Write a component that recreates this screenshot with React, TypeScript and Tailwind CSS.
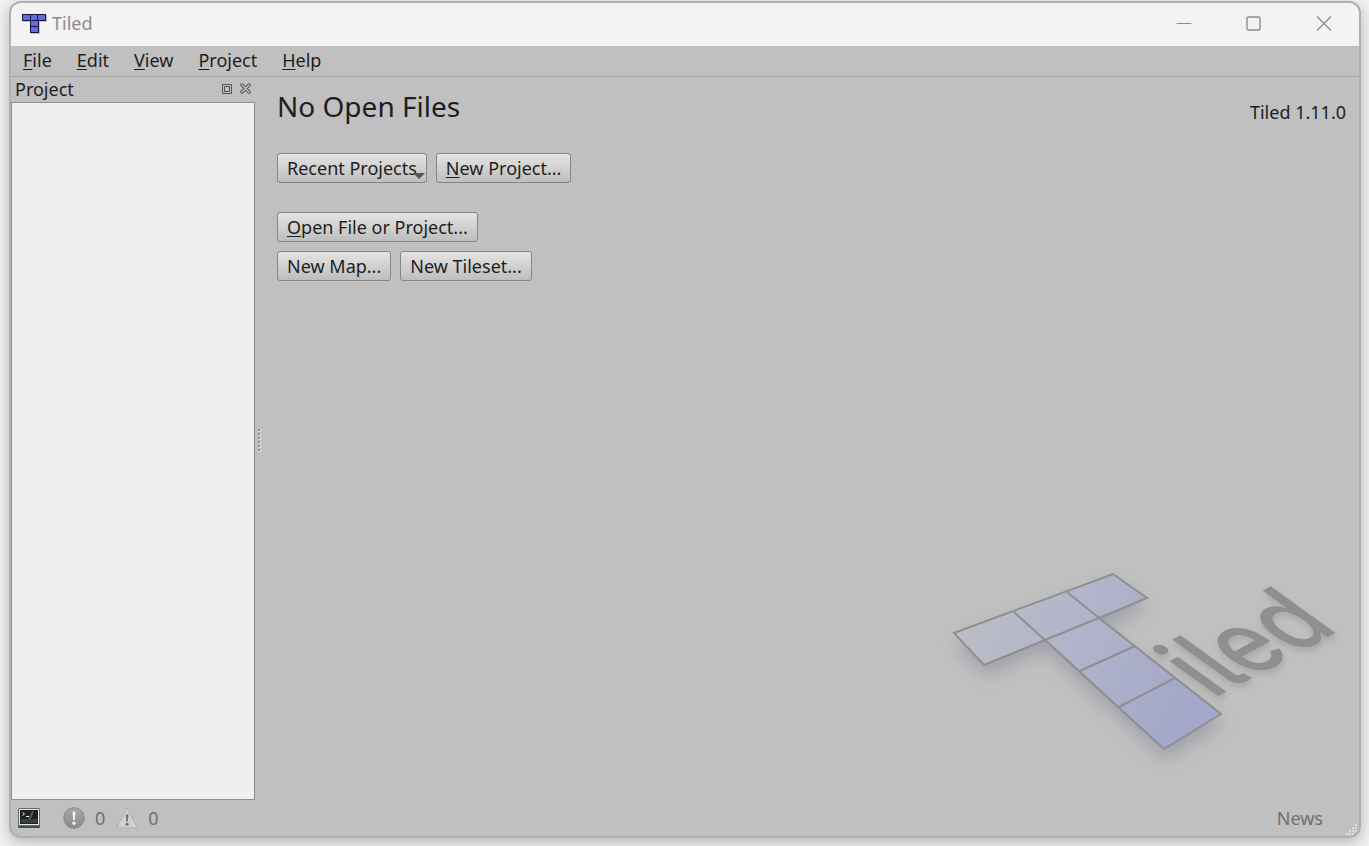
import type { ReactNode } from "react";

const menus = ["File", "Edit", "View", "Project", "Help"];

// underlines the first letter as keyboard mnemonic
function Mnemonic({ text }: { text: string }) {
  return (
    <span>
      <span className="underline decoration-1 underline-offset-2">{text[0]}</span>
      {text.slice(1)}
    </span>
  );
}

function PushButton({ children }: { children: ReactNode }) {
  return (
    <button
      type="button"
      className="flex h-[30px] items-center whitespace-nowrap rounded-[3px] border border-[#868686] bg-linear-to-b from-[#e4e4e4] to-[#bebebe] px-[9px] hover:from-[#ececec]"
    >
      {children}
    </button>
  );
}

function AppIcon() {
  return (
    <svg width="25" height="20" viewBox="0 0 25 20" aria-hidden="true" shapeRendering="crispEdges">
      <path d="M1 1h24v7h-7v12H9V8H1z" fill="#c4c4c8" />
      <path d="M0 0h24v7h-7v12H8V7H0z" fill="#16163c" />
      <g fill="#626bdf">
        <path d="M1 1h7v5H1zM9 1h6v5H9zM16 1h7v5h-7zM9 7h7v5H9zM9 13h7v5H9z" />
      </g>
    </svg>
  );
}

function TiledLogo() {
  return (
    <svg width="406" height="226" viewBox="0 0 406 226" role="img" aria-label="Tiled logo" className="overflow-visible">
      <defs>
        <linearGradient id="tiles" x1="20" y1="60" x2="250" y2="160" gradientUnits="userSpaceOnUse">
          <stop offset="0" stopColor="#bcbdc7" />
          <stop offset="0.45" stopColor="#b1b4ca" />
          <stop offset="1" stopColor="#a3a7c9" />
        </linearGradient>
        <filter id="soft" x="-20%" y="-20%" width="140%" height="150%">
          <feGaussianBlur stdDeviation="9" />
        </filter>
        <filter id="softText" x="-20%" y="-20%" width="140%" height="150%">
          <feDropShadow dx="1" dy="4" stdDeviation="3" floodColor="#8c8c8c" floodOpacity="0.5" />
        </filter>
      </defs>
      <path
        d="M14 73L173 14L207 38L159 58L281 154L224 189L105 80L44 105Z"
        transform="translate(1 10)"
        fill="#888a9b"
        opacity="0.6"
        filter="url(#soft)"
      />
      <path
        d="M14 73L173 14L207 38L159 58L281 154L224 189L105 80L44 105Z"
        fill="url(#tiles)"
        stroke="#8f8f8f"
        strokeWidth="2"
      />
      <path
        d="M74 52L105 80L159 58L127 32M140 111L195 86M179 147L235 118"
        fill="none"
        stroke="#8f8f8f"
        strokeWidth="2"
      />
      <g filter="url(#softText)">
        <text
          transform="matrix(0.74 -0.4 0.89 0.64 273 139)"
          fontSize="100"
          fontWeight="500"
          fill="#8f8f8f"
          className="font-['Inter','Open_Sans',sans-serif] [font-feature-settings:'cv05']"
        >
          iled
        </text>
      </g>
    </svg>
  );
}

function TitleBar() {
  return (
    <header className="flex h-[43px] shrink-0 items-center bg-[#f3f3f3] pb-0.5 pl-[11px] text-[#8c8c8c]">
      <AppIcon />
      <h1 className="ml-[5px] flex-1 pb-0.5 text-lg">Tiled</h1>
      <button type="button" aria-label="Minimize" className="flex h-full w-[70px] items-center justify-center">
        <svg width="16" height="16" viewBox="0 0 16 16" stroke="#8c8c8c">
          <path d="M0.5 7.5h15" />
        </svg>
      </button>
      <button type="button" aria-label="Maximize" className="flex h-full w-[70px] items-center justify-center">
        <svg width="16" height="16" viewBox="0 0 16 16" fill="none" stroke="#8c8c8c" strokeWidth="1.4">
          <rect x="1" y="1" width="13" height="13" rx="1.5" />
        </svg>
      </button>
      <button type="button" aria-label="Close" className="flex h-full w-[70px] items-center justify-center">
        <svg width="16" height="16" viewBox="0 0 16 16" stroke="#8c8c8c" strokeWidth="1.3">
          <path d="M1 0.5l14 14M15 0.5l-14 14" />
        </svg>
      </button>
    </header>
  );
}

function ProjectDock() {
  return (
    <aside className="flex w-[244px] shrink-0 flex-col">
      <div className="flex h-[25px] shrink-0 items-center pb-0.5 pl-1 pr-1">
        <h2 className="flex-1">Project</h2>
        <button type="button" aria-label="Float" className="mr-[7px]">
          <svg width="11" height="11" viewBox="0 0 11 11" fill="none" stroke="#555">
            <path d="M0.5 1.5h9v9h-9zM2.500 3.500h5v5h-5z" />
          </svg>
        </button>
        <button type="button" aria-label="Close dock">
          <svg width="11" height="11" viewBox="0 0 11 11">
            <path d="M2 2l7 7M9 2l-7 7" stroke="#555" strokeWidth="3.4" strokeLinecap="round" />
            <path d="M2 2l7 7M9 2l-7 7" stroke="#c8c8c8" strokeWidth="1.4" strokeLinecap="round" />
          </svg>
        </button>
      </div>
      <div className="flex-1 border border-[#8f8f8f] bg-[#efefef]" />
    </aside>
  );
}

function Splitter() {
  return (
    <div className="flex w-2 shrink-0 flex-col items-center justify-center gap-px pt-1">
      {[0, 1, 2, 3, 4, 5].map((i) => (
        <span key={i} className="size-[3px] border-b border-r border-[#dcdcdc] bg-[#8f8f8f]" />
      ))}
    </div>
  );
}

function StatusBar() {
  return (
    <footer className="flex h-9 shrink-0 items-center pl-[7px] text-[#707070]">
      <button type="button" aria-label="Console">
        <svg width="22" height="20" viewBox="0 0 22 20">
          <rect x="0" y="2" width="22" height="18" rx="1" fill="#4c4c4c" />
          <rect x="0.5" y="0.5" width="21" height="17" rx="0.5" fill="#e6e6e6" stroke="#6a6a6a" />
          <rect x="2" y="2" width="18" height="14" fill="#1b211f" />
          <path d="M3 11h16v4H3z" fill="#34403b" />
          <path d="M10 11l4-8h2l-3 8z" fill="#4b5651" />
          <path d="M4.500 4.500l2 1.500l-2 1.500M8 8.500h3" fill="none" stroke="#eee" />
        </svg>
      </button>
      <button type="button" className="ml-[23px] flex items-center" aria-label="0 errors">
        <svg width="22" height="22" viewBox="0 0 22 22">
          <defs>
            <linearGradient id="err" x1="0" y1="0" x2="0" y2="1">
              <stop offset="0" stopColor="#a8a8a8" />
              <stop offset="1" stopColor="#8c8c8c" />
            </linearGradient>
          </defs>
          <circle cx="11" cy="11" r="10.300" fill="url(#err)" stroke="#868686" />
          <path d="M9.500 4.500h3l-0.700 8.500h-1.600z" fill="#f2f2f2" />
          <circle cx="11" cy="16.300" r="1.700" fill="#f2f2f2" />
        </svg>
        <span className="ml-2.5">0</span>
      </button>
      <button type="button" className="ml-[11px] flex items-center" aria-label="0 warnings">
        <svg width="22" height="22" viewBox="0 0 22 22">
          <path d="M11 0.800L21.500 21H0.500z" fill="#d0d0d0" stroke="#adadad" strokeLinejoin="round" />
          <path d="M9.800 7.500h2.600l-0.500 7h-1.600z" fill="#707070" />
          <circle cx="11.100" cy="17.300" r="1.500" fill="#707070" />
        </svg>
        <span className="ml-2.5">0</span>
      </button>
      <button type="button" className="ml-auto mr-[22px]">
        News
      </button>
      <svg width="12" height="12" viewBox="0 0 12 12" className="mr-0.5 self-end" fill="#dedede" aria-hidden="true">
        <path d="M10 0h2v2h-2zM7 3h2v2H7zM10 3h2v2h-2zM4 6h2v2H4zM7 6h2v2H7zM10 6h2v2h-2zM1 9h2v2H1zM4 9h2v2H4zM7 9h2v2H7z" />
      </svg>
    </footer>
  );
}

export default function App() {
  return (
    <div className="h-screen bg-[#f1f1f1] pb-2 pl-[9px] pr-2 pt-px font-['Noto_Sans',sans-serif] text-lg text-[#1e1e1e]">
      <div className="flex h-full flex-col overflow-hidden rounded-xl border-2 border-[#b0b0b0] bg-[#c0c0c0] shadow-[0_4px_14px_rgba(0,0,0,0.25)]">
        <TitleBar />

        <nav className="flex h-[31px] shrink-0 items-center gap-[25px] border-b border-[#a6a6a6] pb-0.5 pl-3">
          {menus.map((m) => (
            <button key={m} type="button">
              <Mnemonic text={m} />
            </button>
          ))}
        </nav>

        <div className="flex min-h-0 flex-1">
          <ProjectDock />
          <Splitter />
          <main className="flex min-w-0 flex-1 flex-col pl-[14px] pr-[13px] pt-2">
            <div className="flex items-center justify-between">
              <h2 className="text-[28px] leading-[42px]">No Open Files</h2>
              <span className="pt-3">Tiled 1.11.0</span>
            </div>

            <div className="mt-[26px] flex gap-[9px]">
              <div className="relative">
                <PushButton>Recent Projects</PushButton>
                <svg width="12" height="6" viewBox="0 0 12 6" className="absolute bottom-1 right-0.5" aria-hidden="true">
                  <path d="M0 0h12L6 6z" fill="#555" />
                </svg>
              </div>
              <PushButton>
                <Mnemonic text="New Project..." />
              </PushButton>
            </div>

            <div className="mt-[29px] flex">
              <PushButton>
                <Mnemonic text="Open File or Project..." />
              </PushButton>
            </div>
            <div className="mt-[9px] flex gap-[9px]">
              <PushButton>New Map...</PushButton>
              <PushButton>New Tileset...</PushButton>
            </div>

            <div className="mt-auto flex justify-end pb-[14px]">
              <TiledLogo />
            </div>
          </main>
        </div>

        <StatusBar />
      </div>
    </div>
  );
}
